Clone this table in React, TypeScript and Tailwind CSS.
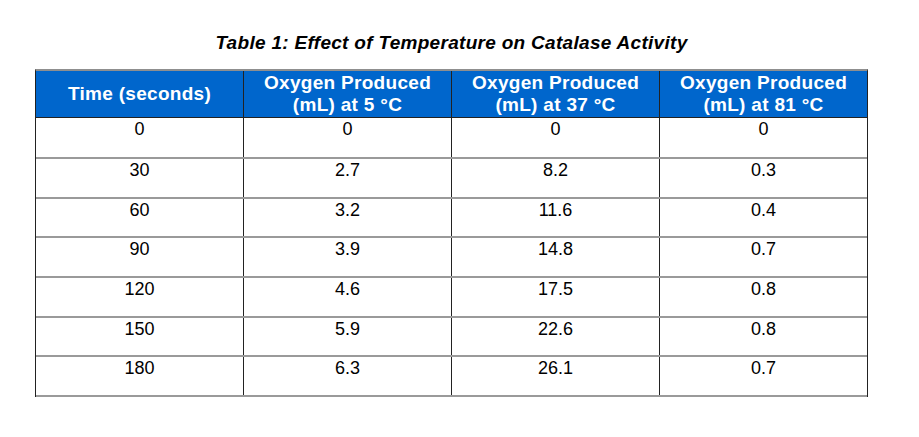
import { FC } from 'react';

const headers = [
  ['Time (seconds)'],
  ['Oxygen Produced', '(mL) at 5 °C'],
  ['Oxygen Produced', '(mL) at 37 °C'],
  ['Oxygen Produced', '(mL) at 81 °C'],
];

const rows = [
  { h: 'h-[41px]', cells: ['0', '0', '0', '0'] },
  { h: 'h-[40px]', cells: ['30', '2.7', '8.2', '0.3'] },
  { h: 'h-[39px]', cells: ['60', '3.2', '11.6', '0.4'] },
  { h: 'h-[40px]', cells: ['90', '3.9', '14.8', '0.7'] },
  { h: 'h-[40px]', cells: ['120', '4.6', '17.5', '0.8'] },
  { h: 'h-[39px]', cells: ['150', '5.9', '22.6', '0.8'] },
  { h: 'h-[40px]', cells: ['180', '6.3', '26.1', '0.7'] },
];

const App: FC = () => {
  return (
    <div className="w-[919px] h-[437px] bg-white text-black font-['Liberation_Sans',Arial,sans-serif]">
      <div className="pt-[32px] pl-[35px]">
        {/* Title */}
        <h1 className="w-[833px] text-center text-[19px] leading-[22px] font-bold italic tracking-[0.3px]">
          Table 1: Effect of Temperature on Catalase Activity
        </h1>

        {/* Table */}
        <div className="mt-[15px] w-[833px] border-l border-r border-[#222] border-t-2 border-t-[#8f8f8f]">
          <div className="flex h-[47px] bg-[#0066cc] border-b border-b-[#222]">
            {headers.map((lines, i) => (
              <div
                key={i}
                className={`flex-1 flex flex-col items-center justify-center text-white font-bold text-[19px] leading-[22px] tracking-[0.3px] ${
                  i < 3 ? 'border-r border-[#222]' : ''
                }`}
              >
                {lines.map((l) => (
                  <span key={l}>{l}</span>
                ))}
              </div>
            ))}
          </div>

          {rows.map((row, r) => (
            <div key={r} className={`flex ${row.h} border-b-2 border-b-[#9a9a9a]`}>
              {row.cells.map((c, i) => (
                <div
                  key={i}
                  className={`flex-1 text-center text-[18px] leading-[21px] pt-[1px] ${
                    i < 3 ? 'border-r border-[#222]' : ''
                  }`}
                >
                  {c}
                </div>
              ))}
            </div>
          ))}
        </div>
      </div>
    </div>
  );
};

export default App;
